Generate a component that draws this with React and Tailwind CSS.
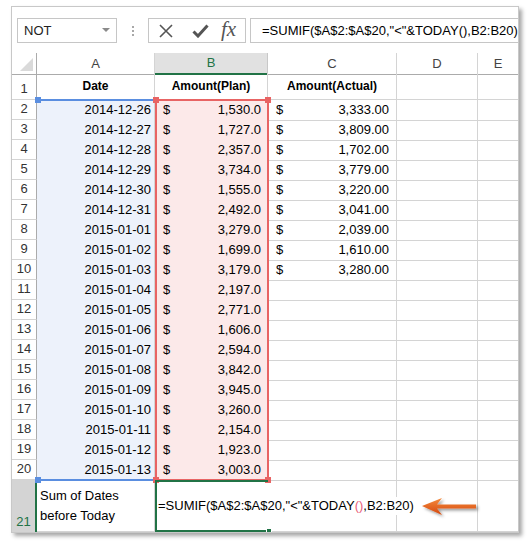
import React from 'react';

const font = { fontFamily: '"Liberation Sans", Arial, sans-serif' };

const rows = [
  ['2014-12-26', '1,530.0', '3,333.00'],
  ['2014-12-27', '1,727.0', '3,809.00'],
  ['2014-12-28', '2,357.0', '1,702.00'],
  ['2014-12-29', '3,734.0', '3,779.00'],
  ['2014-12-30', '1,555.0', '3,220.00'],
  ['2014-12-31', '2,492.0', '3,041.00'],
  ['2015-01-01', '3,279.0', '2,039.00'],
  ['2015-01-02', '1,699.0', '1,610.00'],
  ['2015-01-03', '3,179.0', '3,280.00'],
  ['2015-01-04', '2,197.0', ''],
  ['2015-01-05', '2,771.0', ''],
  ['2015-01-06', '1,606.0', ''],
  ['2015-01-07', '2,594.0', ''],
  ['2015-01-08', '3,842.0', ''],
  ['2015-01-09', '3,945.0', ''],
  ['2015-01-10', '3,260.0', ''],
  ['2015-01-11', '2,154.0', ''],
  ['2015-01-12', '1,923.0', ''],
  ['2015-01-13', '3,003.0', ''],
];

const grid = 'grid grid-cols-[25px_118px_113px_129px_81px_40px]';
const line = 'border-r border-b border-[#d4d4d4]';

const Formula = ({ colored }) => (
  <>
    =SUMIF($A$2:$A$20,"&lt;"&amp;TODAY<span className={colored ? 'text-[#e8607a]' : ''}>()</span>,B2:B20)
  </>
);

const Toolbar = () => (
  <div className="h-[46px] flex items-start pt-[11px] pl-[5px] gap-0">
    {/* name box */}
    <div className="w-[100px] h-[25px] border border-[#c6c6c6] flex items-center justify-between pl-[6px] pr-[6px] text-[13px] text-[#222]">
      <span>NOT</span>
      <svg width="8" height="5" viewBox="0 0 8 5"><path d="M0 0 L8 0 L4 4 Z" fill="#8a8a8a" /></svg>
    </div>
    <div className="w-[31px] h-[25px] flex flex-col items-center justify-center gap-[2px]">
      <span className="w-[2px] h-[2px] bg-[#a8a8a8]" />
      <span className="w-[2px] h-[2px] bg-[#a8a8a8]" />
      <span className="w-[2px] h-[2px] bg-[#a8a8a8]" />
    </div>
    {/* buttons */}
    <div className="w-[98px] h-[25px] border border-[#c6c6c6] flex items-center pl-[10px] gap-[19px]">
      <svg width="14" height="14" viewBox="0 0 14 14"><path d="M1 1 L13 13 M13 1 L1 13" stroke="#555" strokeWidth="1.6" /></svg>
      <svg width="17" height="14" viewBox="0 0 17 14"><path d="M1.5 7.5 L6 12 L15.5 1.5" stroke="#555" strokeWidth="3" fill="none" strokeLinejoin="miter" /></svg>
      <span className="-ml-[7px] text-[21px] italic text-[#555] leading-none -mt-[3px]" style={{ fontFamily: '"Liberation Serif", serif' }}>fx</span>
    </div>
    <div className="ml-[4px] flex-1 h-[25px] border border-r-0 border-[#c6c6c6] flex items-center pl-[11px] text-[13px] text-black whitespace-nowrap overflow-hidden">
      <Formula />
      <span className="w-[1px] h-[15px] bg-[#222] ml-[1px]" />
    </div>
  </div>
);

const ColHeader = () => (
  <div className={`${grid} h-[20px] text-[13px] text-[#444]`}>
    <div className="border-r border-b border-[#ababab] relative">
      <svg className="absolute right-[3px] bottom-[3px]" width="13" height="13" viewBox="0 0 13 13"><path d="M13 0 L13 13 L0 13 Z" fill="#dadada" /></svg>
    </div>
    <div className="border-r border-b border-[#ababab] border-r-[#d4d4d4] flex items-center justify-center">A</div>
    <div className="bg-[#e1e1e1] border-r border-[#c8c8c8] border-b-2 border-b-[#217346] flex items-center justify-center text-[#217346]">B</div>
    <div className="border-r border-b border-[#ababab] border-r-[#d4d4d4] flex items-center justify-center">C</div>
    <div className="border-r border-b border-[#ababab] border-r-[#d4d4d4] flex items-center justify-center">D</div>
    <div className="border-b border-[#ababab] flex items-center justify-center">E</div>
  </div>
);

const RowNum = ({ n, h }) => (
  <div className={`border-r border-b border-[#ababab] border-b-[#d4d4d4] flex items-end justify-center pb-[1px] text-[13px] font-normal text-[#333] ${h}`}>{n}</div>
);

const Sq = ({ className }) => <span className={`absolute w-[6px] h-[6px] ${className}`} />;

export default function App() {
  return (
    <div className="w-[528px] h-[543px] bg-white pt-[6px] pl-[11px]" style={font}>
      <div className="w-[508px] h-[527px] border border-[#c8c8c8] bg-white shadow-[3px_3px_4px_rgba(0,0,0,0.35)] overflow-hidden">
        <Toolbar />
        <ColHeader />
        <div className="relative">
          {/* row 1 */}
          <div className={`${grid} h-[27px] text-[12px] font-bold`}>
            <RowNum n="1" h="h-[27px]" />
            <div className={`${line} flex items-end justify-center pb-[4px]`}>Date</div>
            <div className={`${line} flex items-end justify-center pb-[4px]`}>Amount(Plan)</div>
            <div className={`${line} flex items-end justify-center pb-[4px]`}>Amount(Actual)</div>
            <div className={line} />
            <div className="border-b border-[#d4d4d4]" />
          </div>
          {rows.map((r, i) => (
            <div key={i} className={`${grid} h-[20px] text-[13px] text-black`}>
              <RowNum n={i + 2} h="h-[20px]" />
              <div className={`${line} bg-[#edf2fb] flex items-center justify-end pr-[3px]`}>{r[0]}</div>
              <div className={`${line} bg-[#fce9e9] flex items-center justify-between pl-[8px] pr-[6px]`}>
                <span>$</span><span>{r[1]}</span>
              </div>
              <div className={`${line} flex items-center justify-between pl-[8px] pr-[7px]`}>
                {r[2] && <><span>$</span><span>{r[2]}</span></>}
              </div>
              <div className={line} />
              <div className="border-b border-[#d4d4d4]" />
            </div>
          ))}
          {/* row 21 */}
          <div className={`${grid} h-[52px] text-[13px] text-black`}>
            <div className="bg-[#d4d4d4] border-r-2 border-[#217346] flex items-end justify-center pb-[1px] text-[#217346]">21</div>
            <div className={`${line} flex flex-col justify-end pl-[3px] pb-[5px] leading-[20px]`}>
              <span>Sum of Dates</span>
              <span>before Today</span>
            </div>
            <div className="relative z-10 border-l-2 border-t-2 border-b-2 border-[#217346]">
              <div className="absolute left-[1px] top-[15px] whitespace-nowrap bg-white leading-[18px]">
                <Formula colored />
              </div>
              <svg className="absolute left-[263px] top-[13px]" width="62" height="26" viewBox="0 0 62 26">
                <defs>
                  <linearGradient id="ag" x1="0" y1="0" x2="0" y2="1">
                    <stop offset="0" stopColor="#f58a3c" />
                    <stop offset="1" stopColor="#d4480f" />
                  </linearGradient>
                  <filter id="sh" x="-20%" y="-40%" width="150%" height="190%">
                    <feDropShadow dx="2" dy="2" stdDeviation="1.5" floodColor="#000" floodOpacity="0.4" />
                  </filter>
                </defs>
                <path d="M2 11 L22 3 L17 9.5 L56 9.5 L56 13.5 L17 13.5 L22 20 Z" fill="url(#ag)" filter="url(#sh)" />
              </svg>
              <span className="absolute -right-[4px] -bottom-[4px] w-[6px] h-[6px] bg-[#217346] border border-white" />
            </div>
            <div className={line} />
            <div className={line} />
            <div className="border-b border-[#d4d4d4]" />
          </div>

          {/* A2:A20 range highlight */}
          <div className="absolute left-[25px] top-[26px] w-[118px] h-[382px] border-t-2 border-b-2 border-[#5a8ee0] pointer-events-none">
            <Sq className="-left-[2px] -top-[4px] bg-[#5a8ee0]" />
            <Sq className="-left-[2px] -bottom-[4px] bg-[#5a8ee0]" />
          </div>
          {/* B2:B20 range highlight */}
          <div className="absolute left-[143px] top-[26px] w-[114px] h-[382px] border-2 border-[#e86464] pointer-events-none">
            <Sq className="-left-[4px] -top-[4px] bg-[#e86464]" />
            <Sq className="-right-[4px] -top-[4px] bg-[#e86464]" />
            <Sq className="-left-[4px] -bottom-[4px] bg-[#e86464]" />
            <Sq className="-right-[4px] -bottom-[4px] bg-[#e86464]" />
          </div>
        </div>
      </div>
    </div>
  );
}
